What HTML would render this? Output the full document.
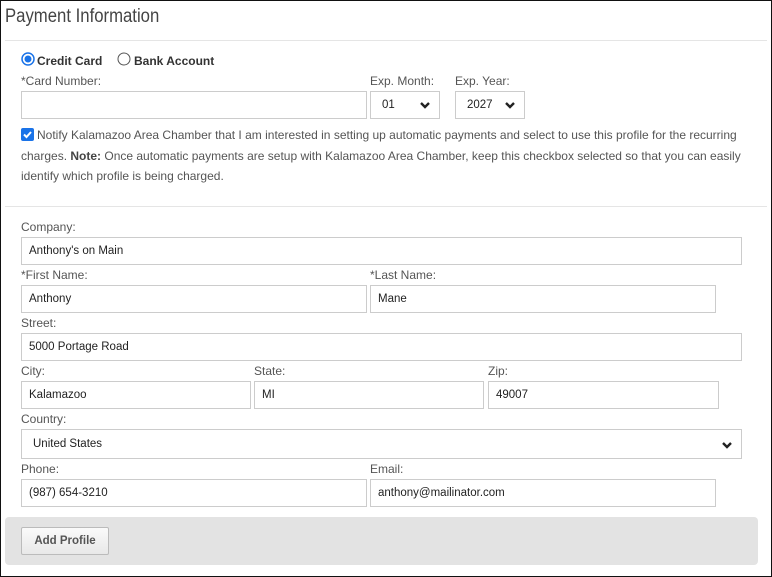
<!DOCTYPE html>
<html><head><style>
body{margin:0;width:772px;height:577px;overflow:hidden;background:#fff;font-family:"Liberation Sans",sans-serif;}
.frame{position:absolute;left:0;top:0;width:770px;height:575px;border:1px solid #111;}
.a{position:absolute;}
.lbl{position:absolute;font-size:12px;color:#555;}
.inp{position:absolute;box-sizing:border-box;border:1px solid #ccc;height:28px;font-size:11.5px;color:#222;padding-left:7px;line-height:27px;background:#fff;}
.chev{position:absolute;right:9px;top:9px;}
.hr{position:absolute;left:5px;width:762px;height:1px;background:#e5e5e5;}
</style></head><body>
<div class="frame"></div>
<div class="a" style="left:5px;top:6px;font-size:19px;color:#444;transform:scaleX(0.88);transform-origin:0 0;">Payment Information</div>
<div class="hr" style="top:40px"></div>
<svg class="a" style="left:21px;top:52px" width="14" height="14"><circle cx="7" cy="7" r="6" fill="#fff" stroke="#1a73e8" stroke-width="1.5"/><circle cx="7" cy="7" r="3.5" fill="#1a73e8"/></svg>
<div class="a" style="left:37px;top:54px;font-size:12px;font-weight:bold;color:#333">Credit Card</div>
<svg class="a" style="left:117px;top:52px" width="14" height="14"><circle cx="7" cy="7" r="6" fill="#fff" stroke="#555" stroke-width="1"/></svg>
<div class="a" style="left:134px;top:54px;font-size:12px;font-weight:bold;color:#333">Bank Account</div>
<div class="lbl" style="left:21px;top:74px">*Card Number:</div>
<div class="lbl" style="left:370px;top:74px">Exp. Month:</div>
<div class="lbl" style="left:455px;top:74px">Exp. Year:</div>
<div class="inp" style="left:21px;top:91px;width:346px"></div>
<div class="inp" style="left:370px;top:91px;width:70px;padding-left:11px">01<svg class="chev" width="10" height="8"><path d="M1 2l4 4 4-4" stroke="#222" stroke-width="2.4" fill="none"/></svg></div>
<div class="inp" style="left:455px;top:91px;width:70px;padding-left:11px">2027<svg class="chev" width="10" height="8"><path d="M1 2l4 4 4-4" stroke="#222" stroke-width="2.4" fill="none"/></svg></div>
<svg class="a" style="left:21px;top:128px" width="13" height="13"><rect width="13" height="13" rx="2" fill="#1a73e8"/><path d="M3 6.5l2.5 2.5 4.5-5" stroke="#fff" stroke-width="2" fill="none"/></svg>
<div class="a" style="left:21px;top:125px;width:740px;font-size:12px;color:#555;line-height:20.5px;text-indent:16px">Notify Kalamazoo Area Chamber that I am interested in setting up automatic payments and select to use this profile for the recurring charges. <b style="color:#444">Note:</b> Once automatic payments are setup with Kalamazoo Area Chamber, keep this checkbox selected so that you can easily identify which profile is being charged.</div>
<div class="hr" style="top:206px"></div>
<div class="lbl" style="left:21px;top:220px">Company:</div>
<div class="inp" style="left:21px;top:237px;width:721px">Anthony's on Main</div>
<div class="lbl" style="left:21px;top:268px">*First Name:</div>
<div class="lbl" style="left:370px;top:268px">*Last Name:</div>
<div class="inp" style="left:21px;top:285px;width:346px">Anthony</div>
<div class="inp" style="left:370px;top:285px;width:346px">Mane</div>
<div class="lbl" style="left:21px;top:316px">Street:</div>
<div class="inp" style="left:21px;top:333px;width:721px">5000 Portage Road</div>
<div class="lbl" style="left:21px;top:364px">City:</div>
<div class="lbl" style="left:254px;top:364px">State:</div>
<div class="lbl" style="left:488px;top:364px">Zip:</div>
<div class="inp" style="left:21px;top:381px;width:230px">Kalamazoo</div>
<div class="inp" style="left:254px;top:381px;width:230px">MI</div>
<div class="inp" style="left:488px;top:381px;width:231px">49007</div>
<div class="lbl" style="left:21px;top:412px">Country:</div>
<div class="inp" style="left:21px;top:429px;width:721px;height:30px;line-height:29px;padding-left:11px">United States<svg class="chev" width="10" height="8" style="top:11px"><path d="M1 2l4 4 4-4" stroke="#222" stroke-width="2.4" fill="none"/></svg></div>
<div class="lbl" style="left:21px;top:462px">Phone:</div>
<div class="lbl" style="left:370px;top:462px">Email:</div>
<div class="inp" style="left:21px;top:479px;width:346px">(987) 654-3210</div>
<div class="inp" style="left:370px;top:479px;width:346px">anthony@mailinator.com</div>
<div class="a" style="left:5px;top:517px;width:753px;height:48px;background:#e3e3e3;border-radius:4px"></div>
<div class="a" style="left:21px;top:527px;width:88px;height:28px;box-sizing:border-box;border:1px solid #bbb;border-radius:2px;background:linear-gradient(#fafafa,#e8e8e8);font-size:11.5px;font-weight:bold;color:#555;text-align:center;line-height:27px">Add Profile</div>
</body></html>
